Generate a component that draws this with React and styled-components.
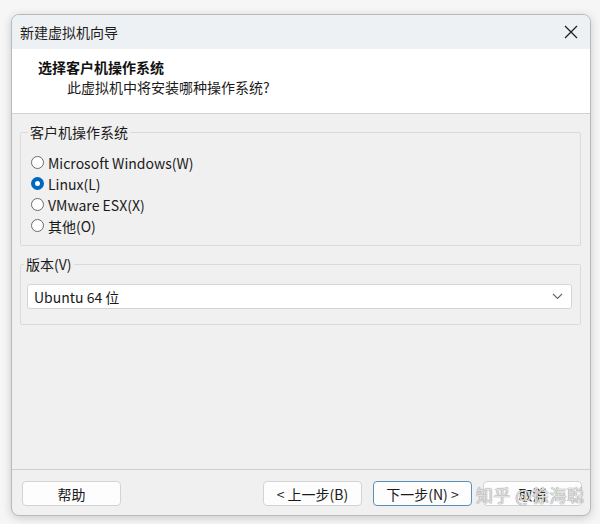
import styled, { createGlobalStyle } from "styled-components";

const GlobalStyle = createGlobalStyle`
  html, body {
    margin: 0;
    padding: 0;
    background: #f6f6f6;
  }
  body {
    font-family: "Noto Sans", "Noto Sans CJK SC", sans-serif;
    font-size: 14px;
    color: #1a1a1a;
  }
`;

const FONT = `"Noto Sans CJK SC", "Noto Sans", sans-serif`;

const Page = styled.div`
  width: 600px;
  height: 524px;
  box-sizing: border-box;
  padding: 14px 9px 8px 11px;
  position: relative;
  font-family: ${FONT};
`;

const Window = styled.div`
  height: 100%;
  box-sizing: border-box;
  border: 1px solid #b9b9b9;
  border-radius: 8px;
  overflow: hidden;
  display: flex;
  flex-direction: column;
  background: #f0f0f0;
  box-shadow: 0 2px 10px rgba(0, 0, 0, 0.18);
`;

const TitleBar = styled.div`
  height: 34px;
  flex-shrink: 0;
  display: flex;
  align-items: center;
  justify-content: space-between;
  padding: 0 12px 0 8px;
  background: #eef1f4;
  font-size: 14px;
  color: #1c1c1c;
`;

const CloseButton = styled.span`
  display: flex;
  align-items: center;
  justify-content: center;
  width: 14px;
  height: 14px;
`;

const Header = styled.div`
  height: 65px;
  flex-shrink: 0;
  box-sizing: border-box;
  background: #ffffff;
  border-bottom: 1px solid #d2d2d2;
  padding: 8px 0 0 26px;
`;

const Heading = styled.div`
  font-weight: 700;
  font-size: 14px;
  line-height: 20px;
  color: #111;
`;

const SubHeading = styled.div`
  font-size: 14px;
  line-height: 20px;
  padding-left: 29px;
  color: #1a1a1a;
`;

const Body = styled.div`
  flex: 1;
  padding: 8px 9px 0 8px;
  display: flex;
  flex-direction: column;
  gap: 8px;
`;

const Group = styled.fieldset`
  margin: 0;
  border: 1px solid #dadada;
  border-radius: 2px;
  padding: ${(p) => p.$pad};
  min-width: 0;
`;

const Legend = styled.legend`
  font-size: 14px;
  line-height: 20px;
  padding: 0 2px;
  margin-left: -3px;
  color: #1a1a1a;
`;

const RadioList = styled.div`
  display: flex;
  flex-direction: column;
`;

const RadioRow = styled.label`
  display: flex;
  align-items: center;
  height: 21px;
  gap: 4px;
  font-size: 14px;
  color: #1a1a1a;
`;

const RadioDot = styled.span`
  width: 13px;
  height: 13px;
  box-sizing: border-box;
  border-radius: 50%;
  flex-shrink: 0;
  border: ${(p) => (p.$checked ? "4px solid #0067c0" : "1px solid #6b6b6b")};
  background: #fff;
`;

const Select = styled.div`
  height: 25px;
  box-sizing: border-box;
  background: #ffffff;
  border: 1px solid #d4d4d4;
  border-radius: 3px;
  display: flex;
  align-items: center;
  justify-content: space-between;
  padding: 0 8px 0 6px;
  font-size: 14px;
  color: #1a1a1a;
`;

const Spacer = styled.div`
  flex: 1;
`;

const Footer = styled.div`
  flex-shrink: 0;
  border-top: 1px solid #cfcfcf;
  display: flex;
  align-items: center;
  gap: 11px;
  padding: 11px 8px 9px 10px;
`;

const Button = styled.button`
  width: 99px;
  height: 25px;
  box-sizing: border-box;
  background: #fdfdfd;
  border: ${(p) => (p.$primary ? "1.5px solid #5b8fb8" : "1px solid #d3d3d3")};
  border-radius: 4px;
  font-family: ${FONT};
  font-size: 14px;
  color: #1a1a1a;
  padding: 0;
`;

const Watermark = styled.span`
  position: absolute;
  left: 476px;
  top: 482px;
  white-space: nowrap;
  font-family: ${FONT};
  font-size: 17px;
  letter-spacing: 0.5px;
  color: rgba(255, 255, 255, 0.75);
  text-shadow: 0 0 1px #8a8a8a, 0 0 1px #8a8a8a;
  pointer-events: none;
`;

const osOptions = [
  { label: "Microsoft Windows(W)", checked: false },
  { label: "Linux(L)", checked: true },
  { label: "VMware ESX(X)", checked: false },
  { label: "其他(O)", checked: false },
];

export default function App() {
  return (
    <>
      <GlobalStyle />
      <Page>
        <Window>
          <TitleBar>
            <span>新建虚拟机向导</span>
            <CloseButton>
              <svg width="14" height="14" viewBox="0 0 14 14">
                <path d="M1 1L13 13M13 1L1 13" stroke="#1f1f1f" strokeWidth="1.3" />
              </svg>
            </CloseButton>
          </TitleBar>
          <Header>
            <Heading>选择客户机操作系统</Heading>
            <SubHeading>此虚拟机中将安装哪种操作系统?</SubHeading>
          </Header>
          <Body>
            <Group $pad="10px 10px 9px 10px">
              <Legend>客户机操作系统</Legend>
              <RadioList>
                {osOptions.map((o) => (
                  <RadioRow key={o.label}>
                    <RadioDot $checked={o.checked} />
                    {o.label}
                  </RadioRow>
                ))}
              </RadioList>
            </Group>
            <Group $pad="10px 8px 15px 6px">
              <Legend>版本(V)</Legend>
              <Select>
                <span>Ubuntu 64 位</span>
                <svg width="11" height="7" viewBox="0 0 11 7">
                  <path d="M1 1L5.5 5.5L10 1" stroke="#6a6a6a" strokeWidth="1.2" fill="none" />
                </svg>
              </Select>
            </Group>
            <Spacer />
          </Body>
          <Footer>
            <Button>帮助</Button>
            <Spacer />
            <Button>&lt; 上一步(B)</Button>
            <Button $primary>下一步(N) &gt;</Button>
            <Button>取消</Button>
          </Footer>
        </Window>
        <Watermark>知乎 @徐海聪</Watermark>
      </Page>
    </>
  );
}
